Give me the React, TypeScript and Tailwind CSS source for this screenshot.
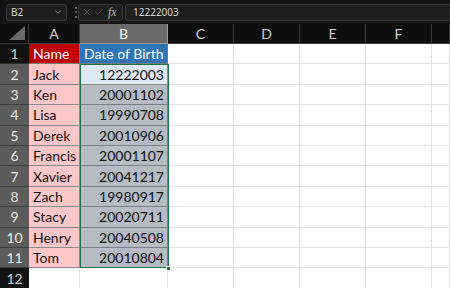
import { ChevronDown, Check, X } from "lucide-react";

const rows = [
  ["Jack", "12222003"],
  ["Ken", "20001102"],
  ["Lisa", "19990708"],
  ["Derek", "20010906"],
  ["Francis", "20001107"],
  ["Xavier", "20041217"],
  ["Zach", "19980917"],
  ["Stacy", "20020711"],
  ["Henry", "20040508"],
  ["Tom", "20010804"],
];

const cols = ["A", "B", "C", "D", "E", "F", ""];
const blanks = [0, 1, 2, 3, 4];

function FormulaBar() {
  return (
    <div className="flex h-[24px] items-center bg-[#141414] pl-[6px] text-[11px] text-[#d6d6d6]">
      <div className="flex h-[17px] w-[61px] items-center justify-between rounded-[3px] border border-[#3b3b3b] bg-[#1f1f1f] pl-[4px] pr-[3px]">
        <span className="text-[10px]">B2</span>
        <ChevronDown size={10} className="text-[#9a9a9a]" />
      </div>
      <span className="mx-[3px] w-[5px] text-center text-[12px] leading-none text-[#8a8a8a]">⋮</span>
      <div className="flex h-[17px] w-[45px] items-center gap-[2px] rounded-[3px] border border-[#3b3b3b] bg-[#1f1f1f] pl-[3px]">
        <X size={10} className="text-[#5a5a5a]" />
        <Check size={10} className="text-[#5a5a5a]" />
        <span className="ml-[2px] font-['Liberation_Serif',serif] text-[12px] italic text-[#bdbdbd]">fx</span>
      </div>
      <div className="ml-[2px] flex h-[17px] flex-1 items-center rounded-l-[3px] border border-r-0 border-[#3b3b3b] bg-[#1f1f1f] pl-[7px] text-[10px]">
        12222003
      </div>
    </div>
  );
}

function Sheet() {
  return (
    <div className="relative grid grid-cols-[29px_51px_88px_66px_66px_66px_66px_1fr] grid-rows-[20px_repeat(12,20.4px)] font-['Lato',sans-serif] text-[14px]">
      {/* header row */}
      <div className="relative border-r border-b border-[#3a3a3a] bg-[#0e0e0e]">
        <svg className="absolute bottom-[3px] right-[3px]" width="16" height="14" viewBox="0 0 16 14">
          <polygon points="16,0 16,14 0,14" fill="#6a6a6a" />
        </svg>
      </div>
      {cols.map((c) => (
        <div
          key={c || "G"}
          className={
            c === "B"
              ? "flex items-center justify-center border-r border-b border-[#9a9a9a] bg-[#6a6a6a] text-[#f2f2f2]"
              : "flex items-center justify-center border-r border-b border-[#3a3a3a] bg-[#0e0e0e] text-[#cfcfcf]"
          }
        >
          {c}
        </div>
      ))}

      {/* row 1 */}
      <div className="flex items-center justify-center border-b border-[#2e2e2e] bg-[#121212] text-[#cfcfcf]">1</div>
      <div className="flex items-center border-r border-b border-[#7a7a7a] bg-[#c00000] pl-[4px] text-white">Name</div>
      <div className="flex items-center border-r border-b border-[#7a7a7a] bg-[#2f75b5] pl-[4px] text-white">Date of Birth</div>
      {blanks.map((b) => (
        <div key={b} className="border-r border-b border-[#e2e2e2] bg-white" />
      ))}

      {/* data rows */}
      {rows.map(([name, dob], i) => (
        <>
          <div key={`h${i}`} className="flex items-center justify-center border-b border-[#3e3e3e] bg-[#5c5c5c] text-[#ececec]">
            {i + 2}
          </div>
          <div key={`a${i}`} className="flex items-center border-r border-b border-[#8a8a8a] bg-[#ffc7c7] pl-[4px] text-[#111]">
            {name}
          </div>
          <div
            key={`b${i}`}
            className={
              i === 0
                ? "flex items-center justify-end border-r border-b border-[#8a8a8a] bg-[#dde9f4] pr-[3px] text-[#111]"
                : "flex items-center justify-end border-r border-b border-[#7b8088] bg-[#b5bcc5] pr-[3px] text-[#111]"
            }
          >
            {dob}
          </div>
          {blanks.map((b) => (
            <div key={`c${i}${b}`} className="border-r border-b border-[#e2e2e2] bg-white" />
          ))}
        </>
      ))}

      {/* row 12 */}
      <div className="flex items-center justify-center bg-[#121212] text-[#cfcfcf]">12</div>
      {[0, 1, 2, 3, 4, 5, 6].map((b) => (
        <div key={`r12${b}`} className="border-r border-[#e2e2e2] bg-white" />
      ))}

      {/* selection outline B2:B11 */}
      <div className="pointer-events-none absolute left-[80px] top-[40.4px] h-[204px] w-[89px] border border-[#217346]" />
      <div className="pointer-events-none absolute left-[166px] top-[242px] h-[5px] w-[5px] border border-white bg-[#217346]" />
    </div>
  );
}

export default function App() {
  return (
    <div className="h-[288px] w-[450px] overflow-hidden bg-white">
      <FormulaBar />
      <Sheet />
    </div>
  );
}
